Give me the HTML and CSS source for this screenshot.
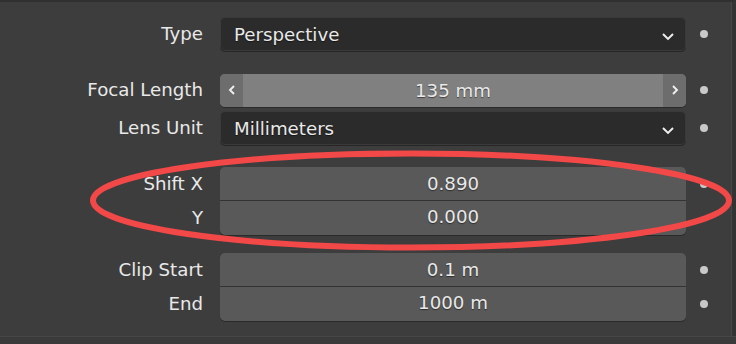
FILE: index.html
```html
<html>
<head>
<link rel="stylesheet" href="styles.css">
<title>Camera lens</title>
</head>
<body>
<div class=panel>
	<div class=rows>
		<div class="row first">
			<div class=label>Type</div>
			<div class="field menu"><span>Perspective</span>
				<svg class=chev width="14" height="10" viewBox="0 0 14 10"><polyline points="2,3 7,8 12,3" /></svg>
			</div>
			<div class=dot></div>
		</div>

		<div class="row gap">
			<div class=label>Focal Length</div>
			<div class="field slider">
				<div class=arrow><svg width="8" height="12" viewBox="0 0 8 12"><polyline points="6,2 2,6 6,10" /></svg></div>
				<div class=val>135 mm</div>
				<div class=arrow><svg width="8" height="12" viewBox="0 0 8 12"><polyline points="2,2 6,6 2,10" /></svg></div>
			</div>
			<div class=dot></div>
		</div>
		<div class="row near">
			<div class=label>Lens Unit</div>
			<div class="field menu"><span>Millimeters</span>
				<svg class=chev width="14" height="10" viewBox="0 0 14 10"><polyline points="2,3 7,8 12,3" /></svg>
			</div>
			<div class=dot></div>
		</div>

		<div class="row gap">
			<div class=label>Shift X</div>
			<div class="field num top">0.890</div>
			<div class=dot></div>
		</div>
		<div class="row">
			<div class=label>Y</div>
			<div class="field num bottom">0.000</div>
			<div></div>
		</div>

		<div class="row gap2">
			<div class=label>Clip Start</div>
			<div class="field num top">0.1 m</div>
			<div class=dot></div>
		</div>
		<div class="row">
			<div class=label>End</div>
			<div class="field num bottom">1000 m</div>
			<div class=dot></div>
		</div>
	</div>

	<!-- red marker round the shift values -->
	<svg class=mark width="736" height="344" viewBox="0 0 736 344">
		<ellipse cx="411" cy="200.5" rx="318" ry="47" />
	</svg>
</div>
<div class=foot></div>
</body>
</html>
```

FILE: styles.css
```css
body{margin:0; background:#3d3d3d; font-family:"DejaVu Sans", sans-serif; font-size:18.2px; color:#e9e9e9; overflow:hidden;}
.panel{position:relative; height:336px; border-top:2px solid #303030; box-sizing:border-box; border-right:4px solid #333; box-shadow:inset -1px 0 0 #474747;}
.rows{padding-top:15px;}
.row{display:grid; grid-template-columns:220px 466px 36px; height:34px; align-items:center;}
.row.gap{margin-top:22px;}
.row.near{margin-top:4px;}
.row.gap2{margin-top:18px;}
.label{text-align:right; white-space:nowrap; line-height:34px; padding-right:17px;}
.field{height:34px; box-sizing:border-box; border-radius:5px; text-shadow:0 1px 1px rgba(0,0,0,.5);}
.menu{background:#2b2b2b; border:1px solid #3a3a3a; box-shadow:0 1px 0 #262626; display:flex; align-items:center; justify-content:space-between; padding:0 10px 0 13px;}
.chev polyline, .arrow polyline{fill:none; stroke:#f0f0f0; stroke-width:1.9;}
.chev{margin-top:3px;}
.slider{background:#808080; display:flex; overflow:hidden; box-shadow:0 1px 0 #2a2a2a; height:33px;}
.slider .arrow{width:23px; background:#6d6d6d; display:flex; align-items:center; justify-content:center;}
.slider .val{flex:1; text-align:center; line-height:33px;}
.num{background:#595959; text-align:center; line-height:34px;}
.num.top{border-radius:5px 5px 0 0; border-bottom:1px solid #333;}
.num.bottom{border-radius:0 0 5px 5px; box-shadow:0 1px 0 #2a2a2a; line-height:32px;}
.dot{width:8px; height:8px; border-radius:50%; background:#c9c9c9; justify-self:center;}
.mark{position:absolute; left:0; top:-2px; pointer-events:none;}
.mark ellipse{fill:none; stroke:#f24848; stroke-width:6;}
.foot{height:8px; background:#3a3a3a; border-top:1px solid #464646;}
```
